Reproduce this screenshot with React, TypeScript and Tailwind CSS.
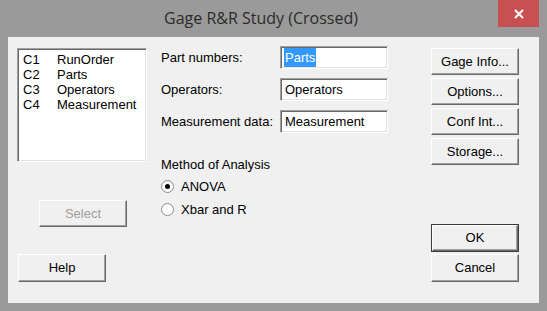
import React from "react";

const font = { fontFamily: '"Liberation Sans", Arial, sans-serif' };

const columns = [
  ["C1", "RunOrder"],
  ["C2", "Parts"],
  ["C3", "Operators"],
  ["C4", "Measurement"],
];

function Btn({ label, w = "w-[88px]", h = "h-[27px]", disabled = false, def = false }: { label: string; w?: string; h?: string; disabled?: boolean; def?: boolean }) {
  if (def) {
    return (
      <div className={`${w} ${h} border border-[#3c3c3c]`}>
        <div className="w-full h-full border border-t-white border-l-white border-b-[#696969] border-r-[#696969] bg-[#f0f0f0] flex items-center justify-center shadow-[inset_-1px_-1px_0_#a0a0a0]">
          <span className="text-black">{label}</span>
        </div>
      </div>
    );
  }
  return (
    <div className={`${w} ${h} border border-t-white border-l-white border-b-[#696969] border-r-[#696969] bg-[#f0f0f0] flex items-center justify-center shadow-[inset_-1px_-1px_0_#a0a0a0]`}>
      <span className={disabled ? "text-[#a0a0a0]" : "text-black"}>{label}</span>
    </div>
  );
}

function Field({ label, value, selected = false }: { label: string; value: string; selected?: boolean }) {
  return (
    <div className="flex items-center h-[23px]">
      <span className="w-[119px]">{label}</span>
      <div className="w-[108px] h-[23px] bg-white border border-t-[#a0a0a0] border-l-[#a0a0a0] border-b-white border-r-white shadow-[inset_1px_1px_0_#696969,inset_-1px_-1px_0_#e3e3e3] flex items-center pl-[3px]">
        {selected ? <span className="bg-[#3399ff] text-white px-[1px]">{value}</span> : <span className="px-[1px]">{value}</span>}
      </div>
    </div>
  );
}

function Radio({ label, checked = false }: { label: string; checked?: boolean }) {
  return (
    <div className="flex items-center h-[23px] gap-[7px]">
      <div className="w-[13px] h-[13px] rounded-full border border-[#8a8a8a] bg-white flex items-center justify-center">
        {checked && <div className="w-[5px] h-[5px] rounded-full bg-black" />}
      </div>
      <span>{label}</span>
    </div>
  );
}

export default function App() {
  return (
    <div className="w-[547px] h-[311px] bg-[#9a9a9a] flex flex-col text-[13px] text-black" style={font}>
      {/* Title bar */}
      <div className="relative h-[37px] flex items-center justify-center pr-[25px] pb-[2px]">
        <span className="text-[16px] text-[#2b2b2b]" style={{ fontFamily: '"Open Sans", "Noto Sans", sans-serif' }}>
          Gage R&amp;R Study (Crossed)
        </span>
        <div className="absolute right-[8px] top-0 w-[41px] h-[27px] bg-[#c75050] flex items-center justify-center">
          <svg width="10" height="10" viewBox="0 0 10 10">
            <path d="M1 1L9 9M9 1L1 9" stroke="white" strokeWidth="2" />
          </svg>
        </div>
      </div>

      {/* Client area */}
      <div className="mx-[8px] mb-[8px] flex-1 bg-[#f0f0f0] flex">
        {/* Left column */}
        <div className="ml-[9px] mt-[11px] w-[130px] flex flex-col">
          <div className="h-[114px] bg-white border border-t-[#a0a0a0] border-l-[#a0a0a0] border-b-white border-r-white shadow-[inset_1px_1px_0_#696969,inset_-1px_-1px_0_#e3e3e3] pt-[3px] pl-[5px]">
            {columns.map(([c, n]) => (
              <div key={c} className="flex h-[15px] items-center">
                <span className="w-[34px]">{c}</span>
                <span>{n}</span>
              </div>
            ))}
          </div>
          <div className="mt-[38px] ml-[22px]">
            <Btn label="Select" disabled />
          </div>
          <div className="mt-[27px] ml-[1px]">
            <Btn label="Help" h="h-[28px]" />
          </div>
        </div>

        {/* Middle column */}
        <div className="ml-[14px] mt-[9px] flex flex-col">
          <div className="flex flex-col gap-[9px]">
            <Field label="Part numbers:" value="Parts" selected />
            <Field label="Operators:" value="Operators" />
            <Field label="Measurement data:" value="Measurement" />
          </div>
          <div className="mt-[24px] h-[15px] flex items-center">Method of Analysis</div>
          <div className="mt-[3px] flex flex-col">
            <Radio label="ANOVA" checked />
            <Radio label="Xbar and R" />
          </div>
        </div>

        {/* Right column */}
        <div className="ml-auto mr-[20px] mt-[11px] flex flex-col">
          <div className="flex flex-col gap-[3px]">
            <Btn label="Gage Info..." />
            <Btn label="Options..." />
            <Btn label="Conf Int..." />
            <Btn label="Storage..." />
          </div>
          <div className="mt-[59px] flex flex-col gap-[2px]">
            <Btn label="OK" h="h-[28px]" def />
            <Btn label="Cancel" h="h-[28px]" />
          </div>
        </div>
      </div>
    </div>
  );
}
